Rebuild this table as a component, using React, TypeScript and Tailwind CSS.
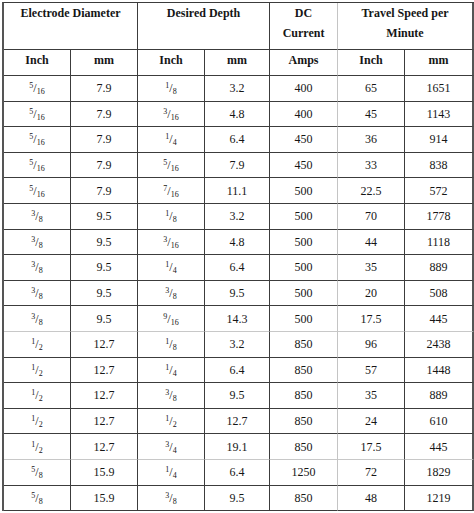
import React from "react";

type Cell = string | [string, string];

const rows: Cell[][] = [
  [["5", "16"], "7.9", ["1", "8"], "3.2", "400", "65", "1651"],
  [["5", "16"], "7.9", ["3", "16"], "4.8", "400", "45", "1143"],
  [["5", "16"], "7.9", ["1", "4"], "6.4", "450", "36", "914"],
  [["5", "16"], "7.9", ["5", "16"], "7.9", "450", "33", "838"],
  [["5", "16"], "7.9", ["7", "16"], "11.1", "500", "22.5", "572"],
  [["3", "8"], "9.5", ["1", "8"], "3.2", "500", "70", "1778"],
  [["3", "8"], "9.5", ["3", "16"], "4.8", "500", "44", "1118"],
  [["3", "8"], "9.5", ["1", "4"], "6.4", "500", "35", "889"],
  [["3", "8"], "9.5", ["3", "8"], "9.5", "500", "20", "508"],
  [["3", "8"], "9.5", ["9", "16"], "14.3", "500", "17.5", "445"],
  [["1", "2"], "12.7", ["1", "8"], "3.2", "850", "96", "2438"],
  [["1", "2"], "12.7", ["1", "4"], "6.4", "850", "57", "1448"],
  [["1", "2"], "12.7", ["3", "8"], "9.5", "850", "35", "889"],
  [["1", "2"], "12.7", ["1", "2"], "12.7", "850", "24", "610"],
  [["1", "2"], "12.7", ["3", "4"], "19.1", "850", "17.5", "445"],
  [["5", "8"], "15.9", ["1", "4"], "6.4", "1250", "72", "1829"],
  [["5", "8"], "15.9", ["3", "8"], "9.5", "850", "48", "1219"],
];

const lightAfter = new Set([9, 14]);

function Frac({ n, d }: { n: string; d: string }) {
  return (
    <span className="whitespace-nowrap">
      <span className="text-[8px] leading-none align-[4px]">{n}</span>
      <span className="leading-none">/</span>
      <span className="text-[8px] leading-none align-[-2px]">{d}</span>
    </span>
  );
}

const colBorder = [
  "border-r-[#3c3c3c]",
  "border-r-[#3c3c3c]",
  "border-r-[#3c3c3c]",
  "border-r-[#3c3c3c]",
  "border-r-[#c4c4c4]",
  "border-r-[#3c3c3c]",
  "border-r-[#555555]",
];

export default function App() {
  return (
    <div
      className="w-[474px] h-[513px] bg-white pl-[2px] pt-[2px] text-[#161616]"
      style={{ fontFamily: '"Liberation Serif", "Times New Roman", serif' }}
    >
      <table className="table-fixed border-separate border-spacing-0 border-l-2 border-t border-l-[#555555] border-t-[#3c3c3c] w-[470px] text-[12px] leading-[20px]">
        <colgroup>
          <col className="w-[67px]" />
          <col className="w-[67px]" />
          <col className="w-[67px]" />
          <col className="w-[65px]" />
          <col className="w-[68px]" />
          <col className="w-[67px]" />
          <col className="w-[69px]" />
        </colgroup>
        <thead className="font-bold">
          <tr className="h-[47px]">
            <th colSpan={2} className="align-top p-0 border-r border-b border-r-[#3c3c3c] border-b-[#3c3c3c]">
              Electrode Diameter
            </th>
            <th colSpan={2} className="align-top p-0 border-r border-b border-r-[#3c3c3c] border-b-[#3c3c3c]">
              Desired Depth
            </th>
            <th className="align-top p-0 border-r border-b border-r-[#c4c4c4] border-b-[#3c3c3c]">
              DC
              <br />
              Current
            </th>
            <th colSpan={2} className="align-top p-0 border-r-2 border-b border-r-[#555555] border-b-[#3c3c3c]">
              Travel Speed per
              <br />
              Minute
            </th>
          </tr>
          <tr className="h-[25px]">
            {["Inch", "mm", "Inch", "mm", "Amps", "Inch", "mm"].map((h, i) => (
              <th
                key={i}
                className={`align-middle p-0 pb-[5px] border-b border-b-[#3c3c3c] ${
                  i === 6 ? "border-r-2" : "border-r"
                } ${colBorder[i]}`}
              >
                {h}
              </th>
            ))}
          </tr>
        </thead>
        <tbody>
          {rows.map((r, ri) => (
            <tr key={ri} className="h-[25.6px]">
              {r.map((c, ci) => (
                <td
                  key={ci}
                  className={`align-middle text-center p-0 border-b ${
                    lightAfter.has(ri) ? "border-b-[#c8c8c8]" : "border-b-[#3c3c3c]"
                  } ${ci === 6 ? "border-r-2" : "border-r"} ${colBorder[ci]}`}
                >
                  {typeof c === "string" ? c : <Frac n={c[0]} d={c[1]} />}
                </td>
              ))}
            </tr>
          ))}
        </tbody>
      </table>
    </div>
  );
}
